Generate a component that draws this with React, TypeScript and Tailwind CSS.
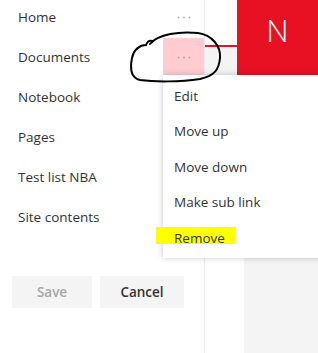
import React from "react";

const navItems = ["Home", "Documents", "Notebook", "Pages", "Test list NBA", "Site contents"];
const menuItems = ["Edit", "Move up", "Move down", "Make sub link", "Remove"];

function Dots({ color }: { color: string }) {
  return (
    <svg width="14" height="3" viewBox="0 0 14 3">
      <circle cx="1.5" cy="1.5" r="0.9" fill={color} />
      <circle cx="7" cy="1.5" r="0.9" fill={color} />
      <circle cx="12.5" cy="1.5" r="0.9" fill={color} />
    </svg>
  );
}

export default function App() {
  return (
    <div
      className="relative w-[318px] h-[353px] overflow-hidden bg-white flex text-[#333333]"
      style={{ fontFamily: '"Open Sans", "Noto Sans", sans-serif' }}
    >
      {/* Left nav panel */}
      <div className="w-[205px] h-full border-r border-[#eaeaea] flex flex-col">
        <div className="flex flex-col -mt-[3px]">
          {navItems.map((item, i) => (
            <div key={item} className="h-[40px] flex items-center">
              <span className="pl-[18px] text-[13.5px] flex-1">{item}</span>
              {i < 2 && (
                <div
                  className={`w-[41px] h-[39px] flex items-center justify-center ${
                    i === 1 ? "bg-[#ffcdd1]" : ""
                  }`}
                >
                  <Dots color="#a6a6a6" />
                </div>
              )}
            </div>
          ))}
        </div>
        <div className="flex gap-[8px] pl-[12px] mt-[39px]">
          <button className="w-[80px] h-[32px] bg-[#f4f4f4] text-[#a6a6a6] text-[13.5px] font-semibold">
            Save
          </button>
          <button className="w-[84px] h-[32px] bg-[#f4f4f4] text-[#333333] text-[13.5px] font-semibold">
            Cancel
          </button>
        </div>
      </div>

      {/* Right area */}
      <div className="flex-1 flex flex-col">
        <div className="flex h-[75px]">
          <div className="w-[32px] flex flex-col">
            <div className="h-[45px] bg-white" />
            <div className="h-[2px] bg-[#e81123]" />
            <div className="flex-1 bg-[#f4f4f4]" />
          </div>
          <div className="flex-1 bg-[#e81123] flex items-start justify-center text-white text-[31px] font-light leading-none pt-[15px]">
            N
          </div>
        </div>
        <div className="flex flex-1">
          <div className="w-[39px] bg-white" />
          <div className="flex-1 bg-[#f4f4f4]" />
        </div>
      </div>

      {/* Context menu */}
      <div className="absolute left-[163px] top-[75px] w-[170px] h-[183px] bg-white shadow-[0_0_6px_rgba(0,0,0,0.22)] pt-[3px]">
        {menuItems.map((m) => (
          <div key={m} className="h-[35.5px] flex items-center pl-[11px] text-[13.5px]">
            {m === "Remove" ? (
              <span className="relative">
                <span className="absolute -left-[18px] -top-[1px] w-[80px] h-[17px] bg-[#ffff00]" />
                <span className="relative">{m}</span>
              </span>
            ) : (
              m
            )}
          </div>
        ))}
      </div>

      {/* Hand-drawn circle */}
      <svg className="absolute left-0 top-0 pointer-events-none" width="318" height="353">
        <path
          d="M150 44 C 158 34, 180 31, 198 33 C 212 35, 221 46, 220 58 C 219 70, 214 76, 200 79 C 180 82, 155 82, 140 80 C 131 78, 130 68, 132 58 C 134 49, 140 45, 146 45 C 147 42, 149 40, 152 41"
          fill="none"
          stroke="#000"
          strokeWidth="2"
          strokeLinecap="round"
        />
      </svg>
    </div>
  );
}
